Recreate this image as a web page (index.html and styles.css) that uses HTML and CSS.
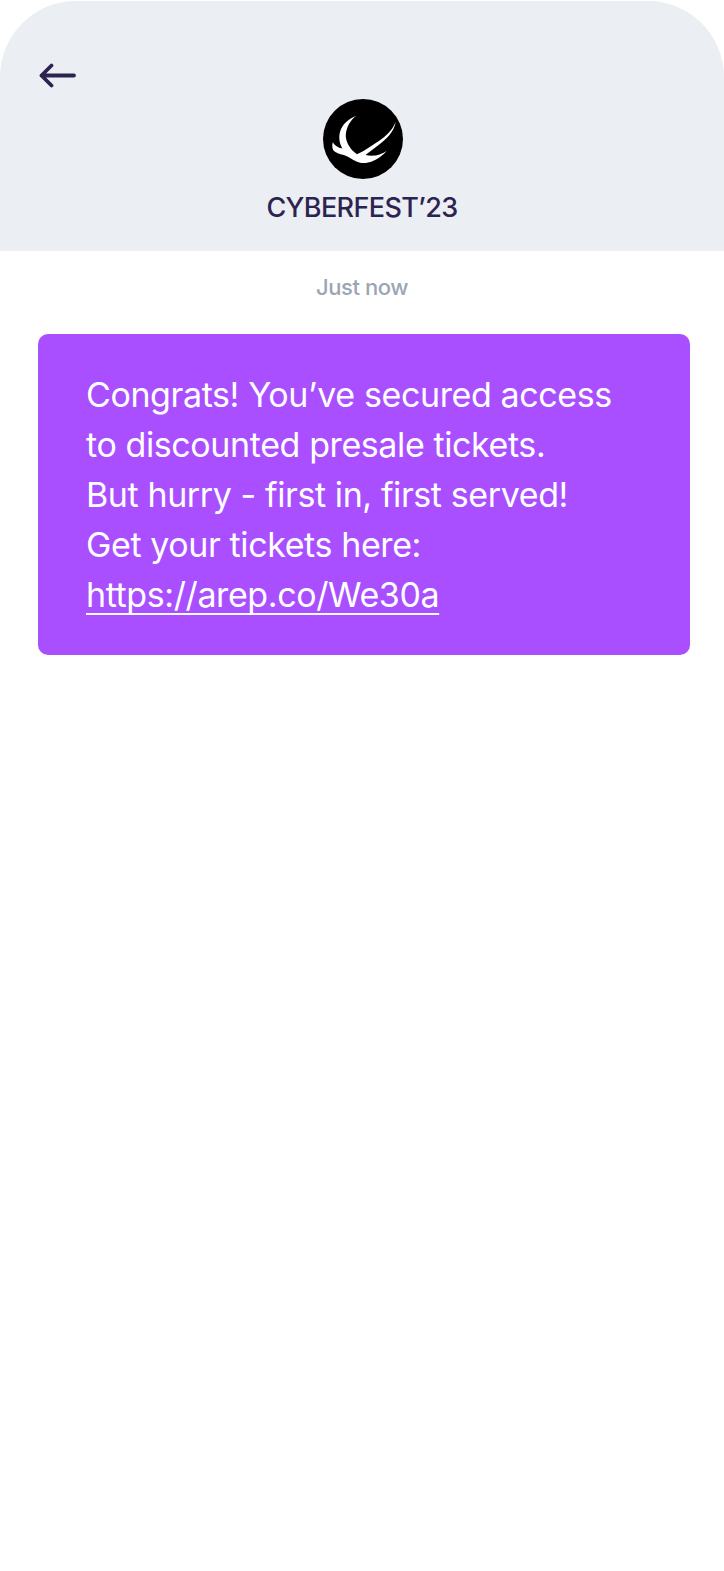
FILE: index.html
```html
<!DOCTYPE html>
<html>
<head>
    <title>Cyberfest'23</title>
    <link rel="stylesheet" href="styles.css">
</head>
<body>
    <header class="header">
        <svg class="back" viewBox="0 0 38 26" width="38" height="26">
            <path d="M36 13.500H3.500M13.500 3.500L3.500 13.500L13.500 23.500" fill="none" stroke="#2d2350" stroke-width="3.800" stroke-linecap="round" stroke-linejoin="round"/>
        </svg>
        <div class="brand">
            <svg class="logo" viewBox="0 0 80 80" width="80" height="80">
                <circle cx="40" cy="40" r="40" fill="#000"/>
                <path d="M33.500 16.700C27.500 20.500 23.500 28 22.800 35.500C22.300 42.500 27 50.500 34 55.300C38 53.500 42 51.200 46 48.500C53 44 60 39.500 65 34.500C68.500 31 71 27 72.700 22.700C72 27.500 70 31.500 66.500 36C61 42.500 51 49.500 42.500 56C47 57 52.500 57 56.500 55.500C59 54.600 61.500 53.300 63.500 52C60.500 55.800 55 60 49.500 62.300C44.500 64.300 38.500 64.800 34 62.800C29 60.500 25 57.500 20.800 56C16.500 54.800 12.500 54 10.500 51.500C9 49 9 46 9.800 43.200C11.500 46.500 15 48.800 19.500 49.500C16.500 45 15.500 38.500 17 33C19 25.500 25.500 19.500 33.500 16.700Z" fill="#fff"/>
            </svg>
            <div class="brand-name">CYBERFEST’23</div>
        </div>
    </header>
    <div class="time">Just now</div>
    <div class="message">
        <p>Congrats! You’ve secured access</p>
        <p>to discounted presale tickets.</p>
        <p>But hurry - first in, first served!</p>
        <p>Get your tickets here:</p>
        <p><a href="#">https://arep.co/We30a</a></p>
    </div>
</body>
</html>
```

FILE: styles.css
```css
body {
    margin: 0;
    background-color: #fff;
    font-family: Inter, "Liberation Sans", sans-serif;
}

.header {
    height: 250px;
    margin-top: 1px;
    padding: 61px 0 0 38px;
    box-sizing: border-box;
    background-color: #ebeef3;
    border-radius: 76px 76px 0 0;
    display: flex;
    position: relative;
}

.back {
    display: block;
}

.brand {
    position: absolute;
    left: 0;
    right: 0;
    top: 98px;
    display: flex;
    flex-direction: column;
    align-items: center;
}

.logo {
    display: block;
    margin-left: 1px;
}

.brand-name {
    margin-top: 12px;
    font-size: 27px;
    line-height: 34px;
    font-weight: 500;
    letter-spacing: -0.6px;
    color: #2d2350;
}

.time {
    margin-top: 22px;
    text-align: center;
    font-size: 22px;
    line-height: 28px;
    font-weight: 500;
    letter-spacing: -0.45px;
    color: #9aa5b5;
}

.message {
    margin: 33px 34px 0 38px;
    padding: 36px 48px 35px;
    background-color: #a94fff;
    border-radius: 10px;
    color: #fff;
    font-size: 34px;
    line-height: 50px;
    letter-spacing: -0.4px;
}

.message p {
    margin: 0;
}

.message a {
    color: #fff;
    text-decoration: underline;
    text-decoration-thickness: 2px;
    text-decoration-skip-ink: none;
    text-underline-offset: 6px;
}
```
